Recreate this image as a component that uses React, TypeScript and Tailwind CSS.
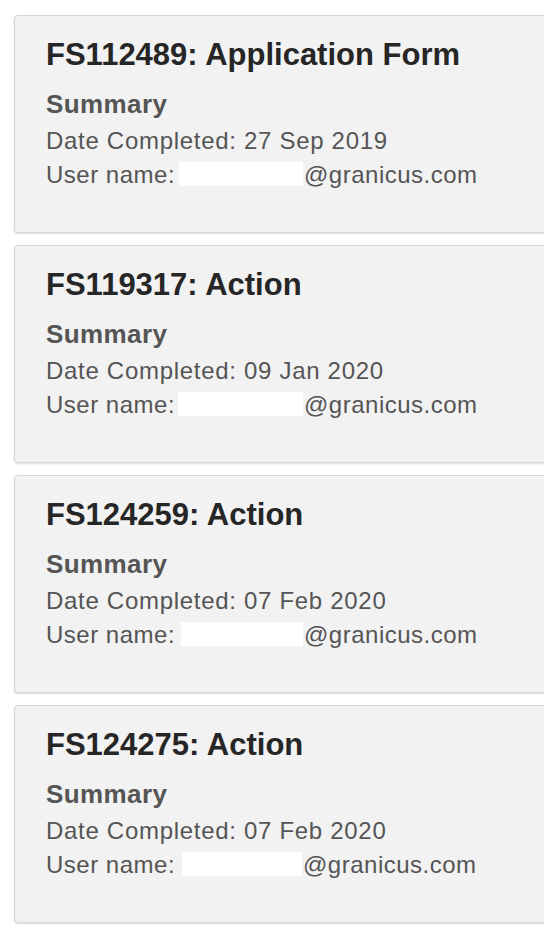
import React from "react";

type Item = { id: string; title: string; date: string; boxX: number; boxW: number };

const items: Item[] = [
  { id: "FS112489", title: "Application Form", date: "27 Sep 2019", boxX: 1, boxW: 124 },
  { id: "FS119317", title: "Action", date: "09 Jan 2020", boxX: 0, boxW: 125 },
  { id: "FS124259", title: "Action", date: "07 Feb 2020", boxX: 3, boxW: 122 },
  { id: "FS124275", title: "Action", date: "07 Feb 2020", boxX: 4, boxW: 120 },
];

function Card({ item }: { item: Item }) {
  return (
    <div className="h-[218px] w-[560px] shrink-0 rounded-[4px] border border-[#d6d6d6] bg-[#f2f2f2] pl-[31px] pt-[21px] shadow-[0_1px_2px_rgba(0,0,0,0.14)]">
      <h2 className="text-[31px] font-bold leading-[36px] text-[#262626]">
        {item.id}: {item.title}
      </h2>
      <h3 className="mt-[16px] text-[26px] font-bold leading-[30px] tracking-[0.4px] text-[#555555]">
        Summary
      </h3>
      <p className="mt-[5px] text-[24px] leading-[34px] tracking-[0.7px] text-[#555555]">
        Date Completed: {item.date}
      </p>
      <div className="flex h-[34px] text-[24px] leading-[34px] tracking-[0.5px] text-[#555555]">
        <span className="w-[132px] shrink-0 whitespace-nowrap">User name:</span>
        <span
          className="mt-[4px] h-[24px] shrink-0 bg-white"
          style={{ width: item.boxW, marginLeft: item.boxX }}
        />
        <span className="ml-[1px] whitespace-nowrap">@granicus.com</span>
      </div>
    </div>
  );
}

export default function App() {
  return (
    <div
      className="min-h-[936px] w-[544px] overflow-hidden bg-white pl-[14px] pt-[15px]"
      style={{ fontFamily: '"Liberation Sans", Arial, Helvetica, sans-serif' }}
    >
      <div className="flex flex-col gap-[12px]">
        {items.map((it) => (
          <Card key={it.id} item={it} />
        ))}
      </div>
    </div>
  );
}
